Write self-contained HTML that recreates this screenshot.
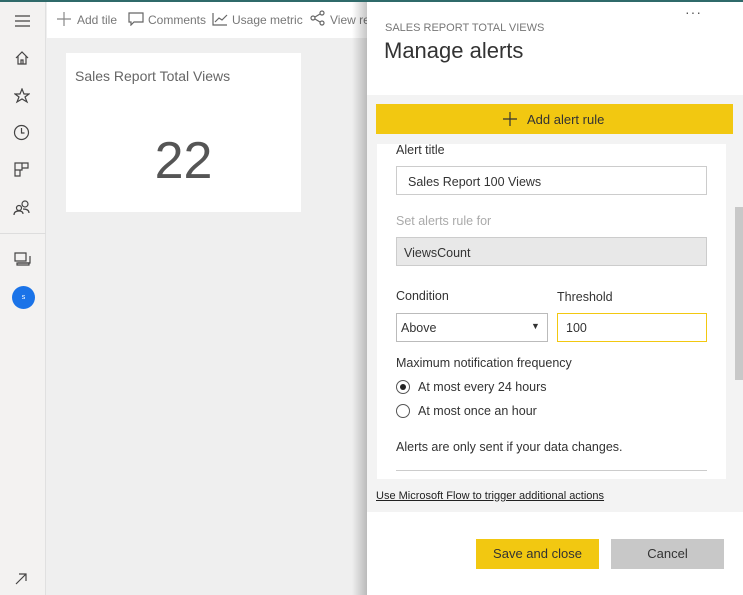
<!DOCTYPE html>
<html><head><meta charset="utf-8"><style>
*{margin:0;padding:0;box-sizing:border-box}
body{width:743px;height:595px;overflow:hidden;position:relative;background:#efefef;font-family:"Liberation Sans",sans-serif;color:#333}
.a{position:absolute}
.t{font-size:12.5px;color:#333;white-space:nowrap}
svg{position:absolute;fill:none;stroke:#444;stroke-width:1.2}
</style></head><body>
<div class="a" style="left:0;top:0;width:743px;height:2px;background:#2f6a6a;z-index:9"></div>
<div class="a" style="left:0;top:0;width:46px;height:595px;background:#f3f2f1;border-right:1px solid #e0e0e0"></div>
<div class="a" style="left:0;top:233px;width:46px;height:1px;background:#ddd"></div>
<svg style="left:14px;top:14px" width="18" height="14"><path d="M1 2h15M1 7h15M1 12h15"/></svg>
<svg style="left:14px;top:50px" width="16" height="16"><path d="M2 8L8 2l6 6M4 6v8h8V6M7 14v-4h2v4"/></svg>
<svg style="left:14px;top:88px" width="16" height="16"><path d="M8 1l2 5h5l-4 3 2 5-5-3-5 3 2-5-4-3h5z"/></svg>
<svg style="left:13px;top:124px" width="17" height="17"><circle cx="8.5" cy="8.5" r="7"/><path d="M8.5 4v5h3"/></svg>
<svg style="left:14px;top:162px" width="16" height="16"><path d="M1 1h7v7H1zM8 1h6v5H8zM1 8h5v6H1z"/></svg>
<svg style="left:13px;top:200px" width="18" height="16"><circle cx="12" cy="4" r="3"/><circle cx="6" cy="8" r="2.5"/><path d="M1 15c0-3 2-4 5-4s4 1 4 3M10 9c3 0 6 1 6 4"/></svg>
<svg style="left:14px;top:251px" width="18" height="16"><path d="M1 2h11v8H1zM4 12h12V5"/><path d="M3 12h12v2H3z"/></svg>
<div class="a" style="left:12px;top:286px;width:23px;height:23px;border-radius:50%;background:#1a73e8;color:#fff;font-size:7px;text-align:center;line-height:23px">s</div>
<svg style="left:14px;top:572px" width="14" height="14"><path d="M2 12L12 2M5 2h7v7"/></svg>

<div class="a" style="left:47px;top:2px;width:320px;height:36px;background:#fff"></div>
<svg style="left:57px;top:12px" width="14" height="14"><path d="M7 0v14M0 7h14" stroke="#888"/></svg>
<div class="a t" style="left:77px;top:13px;color:#777;font-size:12px">Add tile</div>
<svg style="left:128px;top:12px" width="16" height="14"><path d="M1 1h14v9H6l-3 3v-3H1z" stroke="#666"/></svg>
<div class="a t" style="left:148px;top:13px;color:#777;font-size:12px">Comments</div>
<svg style="left:212px;top:12px" width="16" height="14"><path d="M1 1v12h14M3 10l4-4 3 2 5-5" stroke="#666"/></svg>
<div class="a t" style="left:232px;top:13px;color:#777;font-size:12px">Usage metric</div>
<svg style="left:310px;top:10px" width="16" height="16"><circle cx="3" cy="8" r="2" stroke="#666"/><circle cx="12" cy="3" r="2" stroke="#666"/><circle cx="12" cy="13" r="2" stroke="#666"/><path d="M5 7l5-3M5 9l5 3" stroke="#666"/></svg>
<div class="a t" style="left:330px;top:13px;color:#777;font-size:12px">View re</div>

<div class="a" style="left:66px;top:53px;width:235px;height:159px;background:#fff"></div>
<div class="a" style="left:75px;top:68px;font-size:14px;color:#666">Sales Report Total Views</div>
<div class="a" style="left:66px;top:131px;width:235px;text-align:center;font-size:52px;color:#555;font-weight:300">22</div>

<div class="a" style="left:352px;top:0;width:15px;height:595px;background:linear-gradient(to right,rgba(0,0,0,0),rgba(0,0,0,.22))"></div>
<div class="a" style="left:367px;top:2px;width:376px;height:593px;background:#fff"></div>
<div class="a" style="left:685px;top:4px;font-size:14px;color:#555;letter-spacing:1px">···</div>
<div class="a" style="left:385px;top:22px;font-size:11px;color:#777">SALES REPORT TOTAL VIEWS</div>
<div class="a" style="left:384px;top:38px;font-size:22px;color:#333">Manage alerts</div>
<div class="a" style="left:367px;top:95px;width:376px;height:417px;background:#f3f3f3"></div>
<div class="a" style="left:376px;top:104px;width:357px;height:30px;background:#f2c811"></div>
<svg style="left:503px;top:112px" width="14" height="14"><path d="M7 0v14M0 7h14" stroke="#333"/></svg>
<div class="a t" style="left:527px;top:112px;font-size:13px">Add alert rule</div>
<div class="a" style="left:735px;top:207px;width:8px;height:173px;background:#c8c8c8"></div>
<div class="a" style="left:377px;top:144px;width:349px;height:335px;background:#fff"></div>
<div class="a t" style="left:396px;top:143px">Alert title</div>
<div class="a" style="left:396px;top:166px;width:311px;height:29px;border:1px solid #ccc"></div>
<div class="a t" style="left:408px;top:175px">Sales Report 100 Views</div>
<div class="a t" style="left:396px;top:214px;color:#aaa">Set alerts rule for</div>
<div class="a" style="left:396px;top:237px;width:311px;height:29px;border:1px solid #ccc;background:#e8e8e8"></div>
<div class="a t" style="left:404px;top:246px">ViewsCount</div>
<div class="a t" style="left:396px;top:289px">Condition</div>
<div class="a t" style="left:557px;top:290px">Threshold</div>
<div class="a" style="left:396px;top:313px;width:152px;height:29px;border:1px solid #bbb"></div>
<div class="a t" style="left:401px;top:321px">Above</div>
<div class="a" style="left:531px;top:321px;font-size:9px">▼</div>
<div class="a" style="left:557px;top:313px;width:150px;height:29px;border:1px solid #f2c811"></div>
<div class="a t" style="left:566px;top:321px">100</div>
<div class="a t" style="left:396px;top:356px">Maximum notification frequency</div>
<div class="a" style="left:396px;top:380px;width:14px;height:14px;border:1px solid #555;border-radius:50%"></div>
<div class="a" style="left:400px;top:384px;width:6px;height:6px;background:#222;border-radius:50%"></div>
<div class="a t" style="left:418px;top:380px">At most every 24 hours</div>
<div class="a" style="left:396px;top:404px;width:14px;height:14px;border:1px solid #555;border-radius:50%"></div>
<div class="a t" style="left:418px;top:404px">At most once an hour</div>
<div class="a t" style="left:396px;top:440px">Alerts are only sent if your data changes.</div>
<div class="a" style="left:396px;top:470px;width:311px;height:1px;background:#ccc"></div>
<div class="a t" style="left:376px;top:490px;font-size:11px;text-decoration:underline;color:#222">Use Microsoft Flow to trigger additional actions</div>
<div class="a" style="left:476px;top:539px;width:123px;height:30px;background:#f2c811;text-align:center;line-height:30px;font-size:13px">Save and close</div>
<div class="a" style="left:611px;top:539px;width:113px;height:30px;background:#c8c8c8;text-align:center;line-height:30px;font-size:13px">Cancel</div>
</body></html>
